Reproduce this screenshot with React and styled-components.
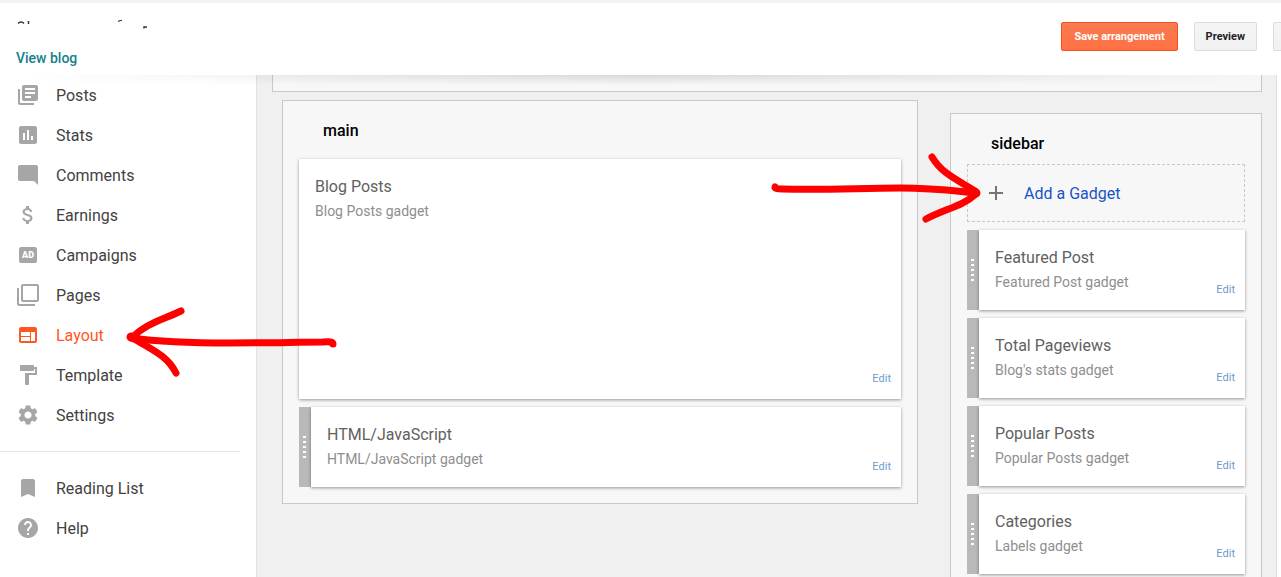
import React, { useState } from 'react';
import styled, { createGlobalStyle } from 'styled-components';
import {
  MdLibraryBooks,
  MdAssessment,
  MdModeComment,
  MdAttachMoney,
  MdFilterNone,
  MdFormatPaint,
  MdSettings,
  MdBookmark,
  MdHelp,
  MdAdd,
} from 'react-icons/md';

const GlobalStyle = createGlobalStyle`
  * {
    box-sizing: border-box;
  }
  body {
    margin: 0;
    background: #fff;
    font-family: Roboto, 'Liberation Sans', sans-serif;
    color: #424242;
  }
  button {
    font-family: inherit;
  }
  a {
    text-decoration: none;
  }
`;

const Page = styled.div`
  display: flex;
  flex-direction: column;
  height: 100vh;
  overflow: hidden;
`;

const Header = styled.header`
  position: relative;
  z-index: 2;
  display: flex;
  justify-content: space-between;
  align-items: flex-start;
  height: 75px;
  flex: none;
  padding: 16px 0 0 16px;
  border-top: 3px solid #f3f3f3;
  background: #fff;

  &::after {
    content: '';
    position: absolute;
    top: 100%;
    left: 0;
    right: 0;
    height: 10px;
    background: linear-gradient(rgba(0, 0, 0, 0.12), rgba(0, 0, 0, 0));
    mask-image: linear-gradient(90deg, transparent 16px, #000 50%, transparent);
    pointer-events: none;
  }
`;

const BlogInfo = styled.div`
  display: flex;
  flex-direction: column;
  gap: 15px;
`;

const ViewBlog = styled.a`
  font-size: 14px;
  line-height: 16px;
  font-weight: 500;
  color: #15808d;
`;

const Actions = styled.div`
  display: flex;
  gap: 16px;
  padding-top: 3px;
`;

const ActionButton = styled.button`
  height: 29px;
  padding: 0 ${(props) => (props.$primary ? '12px' : '11px')};
  border: 1px solid ${(props) => (props.$primary ? '#f4511e' : '#dcdcdc')};
  border-radius: 2px;
  background: ${(props) =>
    props.$primary
      ? 'linear-gradient(#f97b52, #ff7043)'
      : 'linear-gradient(#f5f5f5, #f1f1f1)'};
  color: ${(props) => (props.$primary ? '#fff' : '#222')};
  font-size: 11px;
  font-weight: 700;
  white-space: nowrap;
`;

const CutButton = styled(ActionButton)`
  width: 64px;
  margin-right: -56px;
`;

const Body = styled.div`
  display: flex;
  flex: 1;
  min-height: 0;
`;

const Menu = styled.nav`
  position: relative;
  z-index: 1;
  flex: 0 0 257px;
  border-right: 1px solid #e3e3e3;
`;

const MenuLink = styled.a`
  position: relative;
  display: flex;
  align-items: center;
  gap: 16px;
  height: 40px;
  padding-left: 16px;
  font-size: 16px;
  color: ${(props) => (props.$active ? '#ff5722' : '#424242')};

  > svg:first-child {
    flex: none;
    color: ${(props) => (props.$active ? '#ff5722' : '#a6a6a6')};
  }
`;

const Divider = styled.hr`
  width: 240px;
  height: 1px;
  margin: 16px 0;
  border: 0;
  background: #e5e5e5;
`;

const Workspace = styled.main`
  flex: 1;
  min-width: 0;
  margin-right: 4px;
  padding: 0 14px 0 15px;
  border-right: 1px solid #dedede;
  background: #f0f0f0;
`;

const TopSection = styled.div`
  height: 17px;
  border: 1px solid #c8c8c8;
  border-top: 0;
  background: #f7f7f7;
`;

const Columns = styled.div`
  display: flex;
  align-items: flex-start;
  gap: 32px;
  padding: 8px 0 0 10px;
`;

const Section = styled.section`
  display: flex;
  flex-direction: column;
  gap: 8px;
  flex: ${(props) => (props.$narrow ? '0 0 312px' : '1')};
  margin-top: ${(props) => (props.$narrow ? '13px' : '0')};
  padding: 20px 16px 16px;
  border: 1px solid #c8c8c8;
  background: #f7f7f7;
`;

const SectionTitle = styled.h2`
  margin: 0;
  padding: 0 24px ${(props) => (props.$narrow ? '2px' : '10px')};
  font-size: 16px;
  line-height: 20px;
  font-weight: 500;
  color: #000;
`;

const AddBox = styled.div`
  position: relative;
  display: flex;
  height: 58px;
  border: 1px dashed #c8c8c8;
`;

const AddButton = styled.button`
  display: flex;
  flex: 1;
  align-items: center;
  gap: 16px;
  padding: 0 16px;
  border: 0;
  background: none;
  font-size: 16px;
  color: #1a53c8;

  svg {
    color: #757575;
  }
`;

const Gadget = styled.article`
  display: flex;
  min-height: ${(props) => (props.$tall ? '240px' : '80px')};
`;

const Handle = styled.div`
  display: flex;
  align-items: center;
  flex: 0 0 12px;
  padding-left: 4px;
  background: #b9b9b9;

  &::before {
    content: '';
    width: 3px;
    height: 22px;
    background: repeating-linear-gradient(#fff 0 2px, transparent 2px 5px);
  }
`;

const Card = styled.div`
  display: flex;
  flex: 1;
  justify-content: space-between;
  padding: 16px 10px 12px 16px;
  background: #fff;
  box-shadow: 0 1px 3px rgba(0, 0, 0, 0.4);
`;

const GadgetTitle = styled.h3`
  margin: 0;
  font-size: 16px;
  line-height: 24px;
  font-weight: 400;
  color: #616161;
`;

const GadgetType = styled.p`
  margin: 0;
  font-size: 14px;
  line-height: 24px;
  color: #8e8e8e;
`;

const EditLink = styled.a`
  align-self: flex-end;
  font-size: 11px;
  line-height: 16px;
  color: #6c9bc9;
`;

const Arrow = styled.svg`
  position: absolute;
  z-index: 3;
  top: ${(props) => props.$top}px;
  left: ${(props) => props.$left}px;
  fill: none;
  stroke: #f00;
  stroke-linecap: round;
  stroke-linejoin: round;
  pointer-events: none;
`;

// what is left of the blog name after it was wiped out
function NameTraces() {
  return (
    <svg width='140' height='16' viewBox='0 0 140 16' aria-hidden='true'>
      <path d='M2 4.5Q5 1.5 8 4.5M12.5 2v3' fill='none' stroke='#333' strokeWidth='1.5' />
      <path d='M102 2.5l2-1h2' fill='none' stroke='#335' strokeWidth='1.2' />
      <path d='M128 9.5v-1.5h3' fill='none' stroke='#333' strokeWidth='1.5' />
    </svg>
  );
}

function AdIcon() {
  return (
    <svg width='24' height='24' viewBox='0 0 24 24' aria-hidden='true'>
      <rect x='3' y='4' width='18' height='16' rx='2' fill='currentColor' />
      <text
        x='12'
        y='15'
        textAnchor='middle'
        fontSize='9'
        fontWeight='900'
        fill='#fff'
      >
        AD
      </text>
    </svg>
  );
}

function LayoutIcon() {
  return (
    <svg width='24' height='24' viewBox='0 0 24 24' aria-hidden='true'>
      <path
        fill='currentColor'
        fillRule='evenodd'
        d='M5 4h14a2 2 0 0 1 2 2v12a2 2 0 0 1-2 2H5a2 2 0 0 1-2-2V6a2 2 0 0 1 2-2zM5 9v4h9V9zM5 14v4h9v-4zM15 9v9h4V9z'
      />
    </svg>
  );
}

function LayoutArrow() {
  return (
    <Arrow $top={-15} $left={120} width='222' height='80' viewBox='120 300 222 80' aria-hidden='true'>
      <path strokeWidth='7' d='M132 338C160 342 190 343 230 343C270 343 300 342 323 342Q333 341 333 344' />
      <path strokeWidth='7' d='M133 337C145 324 162 320 181 311' />
      <path strokeWidth='7' d='M133 338C150 349 167 355 176 373' />
      <path strokeWidth='9' d='M131 337L136 338' />
    </Arrow>
  );
}

function GadgetArrow() {
  return (
    <Arrow $top={-15} $left={-198} width='220' height='80' viewBox='770 150 220 80' aria-hidden='true'>
      <path strokeWidth='7' d='M775 187Q774 189 782 189C830 190 860 188 900 188C935 188 955 191 976 193' />
      <path strokeWidth='7' d='M932 157C942 174 958 180 975 191' />
      <path strokeWidth='7' d='M926 219C945 209 963 206 976 194' />
      <path strokeWidth='9' d='M972 192L976 193' />
    </Arrow>
  );
}

const menu = [
  { name: 'Posts', icon: MdLibraryBooks },
  { name: 'Stats', icon: MdAssessment },
  { name: 'Comments', icon: MdModeComment },
  { name: 'Earnings', icon: MdAttachMoney },
  { name: 'Campaigns', icon: AdIcon },
  { name: 'Pages', icon: MdFilterNone },
  { name: 'Layout', icon: LayoutIcon },
  { name: 'Template', icon: MdFormatPaint },
  { name: 'Settings', icon: MdSettings },
];

const extraMenu = [
  { name: 'Reading List', icon: MdBookmark },
  { name: 'Help', icon: MdHelp },
];

const mainGadgets = [
  { title: 'Blog Posts', type: 'Blog Posts gadget', tall: true, fixed: true },
  { title: 'HTML/JavaScript', type: 'HTML/JavaScript gadget' },
];

const sidebarGadgets = [
  { title: 'Featured Post', type: 'Featured Post gadget' },
  { title: 'Total Pageviews', type: "Blog's stats gadget" },
  { title: 'Popular Posts', type: 'Popular Posts gadget' },
  { title: 'Categories', type: 'Labels gadget' },
];

function MenuItem(props) {
  const Icon = props.item.icon;
  return (
    <MenuLink href='#' $active={props.active} onClick={props.onClick}>
      <Icon size={24} />
      {props.item.name}
      {props.item.name === 'Layout' && <LayoutArrow />}
    </MenuLink>
  );
}

function GadgetItem(props) {
  const { title, type, tall, fixed } = props.gadget;
  return (
    <Gadget $tall={tall}>
      {!fixed && <Handle />}
      <Card>
        <div>
          <GadgetTitle>{title}</GadgetTitle>
          <GadgetType>{type}</GadgetType>
        </div>
        <EditLink href='#'>Edit</EditLink>
      </Card>
    </Gadget>
  );
}

function App() {
  const [current, setCurrent] = useState('Layout');

  const renderItem = (item) => (
    <MenuItem
      key={item.name}
      item={item}
      active={current === item.name}
      onClick={() => setCurrent(item.name)}
    />
  );

  return (
    <Page>
      <GlobalStyle />
      <Header>
        <BlogInfo>
          <NameTraces />
          <ViewBlog href='#'>View blog</ViewBlog>
        </BlogInfo>
        <Actions>
          <ActionButton $primary>Save arrangement</ActionButton>
          <ActionButton>Preview</ActionButton>
          <CutButton aria-label='Close' />
        </Actions>
      </Header>
      <Body>
        <Menu>
          {menu.map(renderItem)}
          <Divider />
          {extraMenu.map(renderItem)}
        </Menu>
        <Workspace>
          <TopSection />
          <Columns>
            <Section>
              <SectionTitle>main</SectionTitle>
              {mainGadgets.map((gadget) => (
                <GadgetItem key={gadget.title} gadget={gadget} />
              ))}
            </Section>
            <Section $narrow>
              <SectionTitle $narrow>sidebar</SectionTitle>
              <AddBox>
                <AddButton>
                  <MdAdd size={24} />
                  Add a Gadget
                </AddButton>
                <GadgetArrow />
              </AddBox>
              {sidebarGadgets.map((gadget) => (
                <GadgetItem key={gadget.title} gadget={gadget} />
              ))}
            </Section>
          </Columns>
        </Workspace>
      </Body>
    </Page>
  );
}

export default App;
